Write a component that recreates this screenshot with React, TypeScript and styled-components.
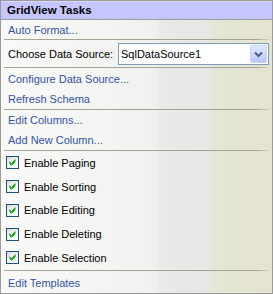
import React from "react";
import styled, { createGlobalStyle } from "styled-components";

const Global = createGlobalStyle`
  html, body { margin: 0; padding: 0; background: #ffffff; }
  body { font-family: "Liberation Sans", Arial, sans-serif; }
  * { box-sizing: border-box; }
`;

const Panel = styled.div`
  width: 273px;
  height: 294px;
  border: 1px solid #9a9a9a;
  display: flex;
  flex-direction: column;
  font-family: "Liberation Sans", Arial, sans-serif;
  font-size: 11px;
  color: #000;
  overflow: hidden;
`;

const Header = styled.div`
  height: 19px;
  flex: none;
  background: #c6c6fe;
  border-top: 1px solid #d8d8f8;
  border-bottom: 1px solid #9a9a9a;
  font-weight: bold;
  font-size: 11.5px;
  padding-left: 6px;
  line-height: 16px;
  color: #000;
`;

const Body = styled.div`
  flex: 1;
  display: flex;
  flex-direction: column;
  background: linear-gradient(
    to right,
    #f9f9f7 0px,
    #f1f1ef 150px,
    #efefec 157px,
    #e9e9e8 159px,
    #e7e7e6 208px,
    #e6e6d6 211px,
    #e3e3cf 271px
  );
`;

const Section = styled.div<{ $pt?: number; $pb?: number }>`
  display: flex;
  flex-direction: column;
  padding: ${(p) => p.$pt ?? 0}px 4px ${(p) => p.$pb ?? 0}px 7px;
`;

const Link = styled.div<{ $h?: number }>`
  height: ${(p) => p.$h ?? 20}px;
  line-height: ${(p) => p.$h ?? 20}px;
  color: #3354a2;
  white-space: nowrap;
`;

const Separator = styled.div`
  height: 1px;
  flex: none;
  margin: 0 3px 0 3px;
  background: linear-gradient(to right, #a6a696 0, #a3a393 95%, #d0d0c4 100%);
`;

const FieldRow = styled.div`
  display: flex;
  align-items: center;
  justify-content: space-between;
  height: 22px;
`;

const FieldLabel = styled.span`
  white-space: nowrap;
`;

const Select = styled.div`
  width: 151px;
  height: 22px;
  border: 1px solid #7f9db9;
  background: #ffffff;
  display: flex;
  align-items: center;
  padding: 0 1px 0 2px;
  margin-right: -1px;
`;

const SelectText = styled.span`
  flex: 1;
  white-space: nowrap;
`;

const DropButton = styled.div`
  width: 17px;
  height: 18px;
  border: 1px solid #c3d3fd;
  border-radius: 2px;
  background: linear-gradient(to bottom, #dfe8fd 0%, #c7d6fb 60%, #b6c8f5 100%);
  display: flex;
  align-items: center;
  justify-content: center;
`;

const CheckRow = styled.label`
  display: flex;
  align-items: center;
  height: 23.75px;
  padding-left: 5px;
  gap: 5px;
  white-space: nowrap;
`;

const Box = styled.span`
  width: 13px;
  height: 13px;
  flex: none;
  border: 1px solid #1c5180;
  background: linear-gradient(135deg, #dcdcd6 0%, #f4f4f2 60%, #ffffff 100%);
  display: flex;
  align-items: center;
  justify-content: center;
`;

const CheckSection = styled.div`
  display: flex;
  flex-direction: column;
  padding: 0 4px 0 0;
`;

const Check = () => (
  <svg width="7" height="7" viewBox="0 0 7 7">
    <path d="M0.5 2.5 L2.5 4.5 L6.5 0.5 M0.5 3.5 L2.5 5.5 L6.5 1.5 M0.5 4.5 L2.5 6.5 L6.5 2.5" stroke="#21a121" strokeWidth="1" fill="none" />
  </svg>
);

const Chevron = () => (
  <svg width="9" height="7" viewBox="0 0 9 7">
    <path d="M1 1.5 L4.5 5 L8 1.5" stroke="#4d6185" strokeWidth="2" fill="none" />
  </svg>
);

const checks = ["Enable Paging", "Enable Sorting", "Enable Editing", "Enable Deleting", "Enable Selection"];

export default function App() {
  return (
    <>
      <Global />
      <Panel>
        <Header>GridView Tasks</Header>
        <Body>
          <Section $pt={3} $pb={1}>
            <Link $h={15}>Auto Format...</Link>
          </Section>
          <Separator />
          <Section $pt={3} $pb={2}>
            <FieldRow>
              <FieldLabel>Choose Data Source:</FieldLabel>
              <Select>
                <SelectText>SqlDataSource1</SelectText>
                <DropButton>
                  <Chevron />
                </DropButton>
              </Select>
            </FieldRow>
          </Section>
          <Separator />
          <Section $pt={1}>
            <Link>Configure Data Source...</Link>
            <Link>Refresh Schema</Link>
          </Section>
          <Separator />
          <Section>
            <Link>Edit Columns...</Link>
            <Link>Add New Column...</Link>
          </Section>
          <Separator />
          <CheckSection>
            {checks.map((c) => (
              <CheckRow key={c}>
                <Box>
                  <Check />
                </Box>
                {c}
              </CheckRow>
            ))}
          </CheckSection>
          <Separator />
          <Section $pt={2}>
            <Link>Edit Templates</Link>
          </Section>
        </Body>
      </Panel>
    </>
  );
}
